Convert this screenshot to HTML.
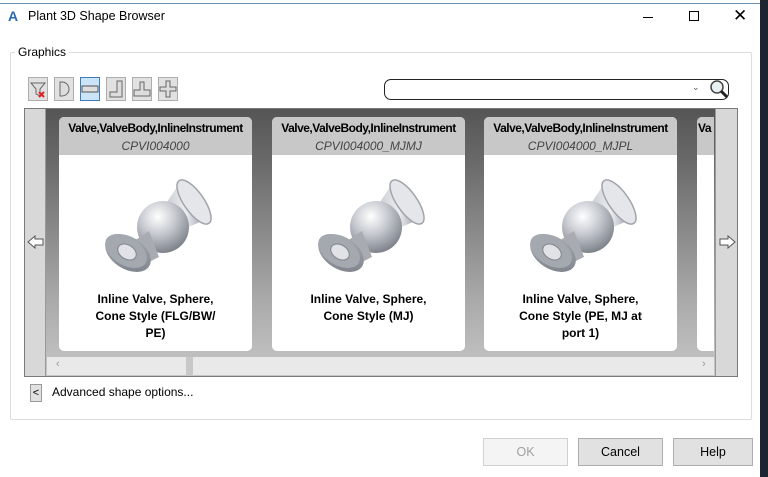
<!DOCTYPE html>
<html><head><meta charset="utf-8"><style>
*{margin:0;padding:0;box-sizing:border-box}
body{width:768px;height:477px;overflow:hidden;background:#fff;font-family:"Segoe UI","Liberation Sans",sans-serif;position:relative;font-size:12px;color:#000}
.a{position:absolute}
.win{left:0;top:3px;width:760px;height:474px;background:#fff;border-top:1px solid #6a8fb0}
.rb{left:760px;top:0;width:8px;height:477px;background:#1d2530}
.grp{left:10px;top:52px;width:742px;height:368px;border:1px solid #dcdcdc;border-radius:2px;background:#fff}
.tb{top:77px;width:20px;height:24px;border:1px solid #adadad;background:#e1e1e1}
.gal{left:24px;top:108px;width:714px;height:269px;border:1px solid #7a7a7a;background:linear-gradient(#555 0%,#6a6a6a 20%,#a8a8a8 70%,#c6c6c6 100%)}
.card{top:117px;width:193px;height:234px;background:#fff;border-radius:5px;overflow:hidden}
.hd{height:38px;background:#c8c8c8;text-align:center;font-weight:bold;font-size:12px;letter-spacing:-0.5px;line-height:20px;padding-top:1px;white-space:nowrap}
.hd i{display:block;font-weight:normal;color:#444;font-size:12px;letter-spacing:0;line-height:16px}
.nm{position:absolute;left:0;width:100%;top:174px;text-align:center;font-weight:bold;font-size:12px;line-height:17px}
.btn{top:438px;height:28px;border:1px solid #adadad;background:#e1e1e1;text-align:center;line-height:26px;font-size:12.5px}
</style></head><body>
<div class="a win"></div>
<div class="a rb"></div>
<div class="a" style="left:8px;top:8px;font-weight:bold;color:#2a6bb5;font-size:14px">A</div>
<div class="a" style="left:28px;top:9px;font-size:12.5px">Plant 3D Shape Browser</div>
<div class="a" style="left:643px;top:17px;width:10px;height:1px;background:#000"></div>
<div class="a" style="left:689px;top:11px;width:10px;height:10px;border:1px solid #000"></div>
<div class="a" style="left:733px;top:6px;font-size:17px;font-weight:300">✕</div>
<div class="a grp"></div>
<div class="a" style="left:15px;top:45px;background:#fff;padding:0 3px;font-size:12px">Graphics</div>
<div class="a tb" style="left:28px"><svg width="18" height="22"><path d="M2 5h14l-5 6v7l-4-2v-5z" fill="#ddd" stroke="#666"/><path d="M10 14l5 5M15 14l-5 5" stroke="#d22" stroke-width="2"/></svg></div>
<div class="a tb" style="left:54px"><svg width="18" height="22"><path d="M5 4h2a7 7 0 0 1 0 14H5z" fill="#ddd" stroke="#666"/></svg></div>
<div class="a tb" style="left:80px;background:#cce4f7;border-color:#3d7bbb"><svg width="18" height="22"><rect x="1" y="8" width="16" height="6" fill="#ddd" stroke="#555"/></svg></div>
<div class="a tb" style="left:106px"><svg width="18" height="22"><path d="M10 3h5v16H3v-5h7z" fill="#ddd" stroke="#666"/></svg></div>
<div class="a tb" style="left:132px"><svg width="18" height="22"><path d="M7 4h4v8h6v6H1v-6h6z" fill="#ddd" stroke="#666"/></svg></div>
<div class="a tb" style="left:158px"><svg width="18" height="22"><path d="M7 3h4v6h6v4h-6v6H7v-6H1V9h6z" fill="#ddd" stroke="#666"/></svg></div>
<div class="a" style="left:384px;top:79px;width:345px;height:21px;border:1.5px solid #222;border-radius:7px;background:#fff"></div>
<div class="a" style="left:692px;top:82px;font-size:9px;color:#555">⌄</div>
<svg class="a" style="left:708px;top:79px" width="22" height="20"><circle cx="9" cy="8" r="6" fill="#e8f0f4" stroke="#444" stroke-width="1.5"/><path d="M13 12l6 6" stroke="#222" stroke-width="3"/></svg>
<div class="a gal"></div>
<div class="a" style="left:25px;top:109px;width:21px;height:267px;background:#d8d8d8;border-right:1px solid #999"></div>
<div class="a" style="left:715px;top:109px;width:22px;height:267px;background:#d8d8d8;border-left:1px solid #999"></div>
<svg class="a" style="left:27px;top:235px" width="18" height="14"><path d="M1 7l7-6v3h8v6H8v3z" fill="#fff" stroke="#555"/></svg>
<svg class="a" style="left:718px;top:235px" width="18" height="14"><path d="M17 7l-7-6v3H2v6h8v3z" fill="#fff" stroke="#555"/></svg>
<div class="a" style="left:47px;top:357px;width:667px;height:18px;background:#e9e9e9"></div>
<div class="a" style="left:186px;top:357px;width:7px;height:18px;background:#c8c8c8"></div>
<div class="a" style="left:56px;top:358px;color:#999;font-size:11px">‹</div>
<div class="a" style="left:702px;top:358px;color:#999;font-size:11px">›</div>

<svg width="0" height="0" style="position:absolute"><defs>
<radialGradient id="s" cx="40%" cy="30%" r="70%"><stop offset="0" stop-color="#fff"/><stop offset=".5" stop-color="#c4c8ce"/><stop offset="1" stop-color="#80848c"/></radialGradient>
<linearGradient id="c" x1="0" y1="0" x2="1" y2="0"><stop offset="0" stop-color="#c8ccd2"/><stop offset=".5" stop-color="#eceef0"/><stop offset="1" stop-color="#9094a0"/></linearGradient>
<linearGradient id="f" x1="0" y1="0" x2="1" y2="1"><stop offset="0" stop-color="#b0b4ba"/><stop offset="1" stop-color="#7a7e86"/></linearGradient>
<g id="v">
<path d="M62 28L78 4L104 42L76 54Z" fill="url(#c)"/>
<ellipse cx="91" cy="25" rx="10" ry="26" transform="rotate(-35 91 25)" fill="#e4e6ea" stroke="#a0a4aa" stroke-width="1.5"/>
<circle cx="60" cy="50" r="26" fill="url(#s)"/>
<path d="M28 66L46 54L56 80L40 88Z" fill="#a8acb2"/>
<ellipse cx="25" cy="76" rx="25" ry="16" transform="rotate(32 25 76)" fill="url(#f)"/>
<ellipse cx="23" cy="74" rx="23" ry="14" transform="rotate(32 23 74)" fill="#a4a8af"/>
<ellipse cx="24" cy="75" rx="10" ry="7" transform="rotate(32 24 75)" fill="#e0e2e6" stroke="#80848c"/>
</g></defs></svg>

<div class="a card" style="left:59px"><div class="hd">Valve,ValveBody,InlineInstrument<i>CPVI004000</i></div>
<svg class="a" style="left:44px;top:60px" width="110" height="98"><use href="#v"/></svg>
<div class="nm">Inline Valve, Sphere,<br>Cone Style (FLG/BW/<br>PE)</div></div>
<div class="a card" style="left:272px"><div class="hd">Valve,ValveBody,InlineInstrument<i>CPVI004000_MJMJ</i></div>
<svg class="a" style="left:44px;top:60px" width="110" height="98"><use href="#v"/></svg>
<div class="nm">Inline Valve, Sphere,<br>Cone Style (MJ)</div></div>
<div class="a card" style="left:484px"><div class="hd">Valve,ValveBody,InlineInstrument<i>CPVI004000_MJPL</i></div>
<svg class="a" style="left:44px;top:60px" width="110" height="98"><use href="#v"/></svg>
<div class="nm">Inline Valve, Sphere,<br>Cone Style (PE, MJ at<br>port 1)</div></div>
<div class="a card" style="left:697px;width:17px;border-radius:5px 0 0 5px"><div class="hd" style="text-align:left;padding-left:1px">Va</div></div>

<div class="a" style="left:30px;top:384px;width:12px;height:18px;border:1px solid #999;background:#e1e1e1;font-size:11px;text-align:center;line-height:16px">&lt;</div>
<div class="a" style="left:52px;top:385px;font-size:12px">Advanced shape options...</div>
<div class="a btn" style="left:483px;width:85px;background:#f4f4f4;border-color:#d0d0d0;color:#a0a0a0">OK</div>
<div class="a btn" style="left:578px;width:85px">Cancel</div>
<div class="a btn" style="left:673px;width:80px">Help</div>
</body></html>
